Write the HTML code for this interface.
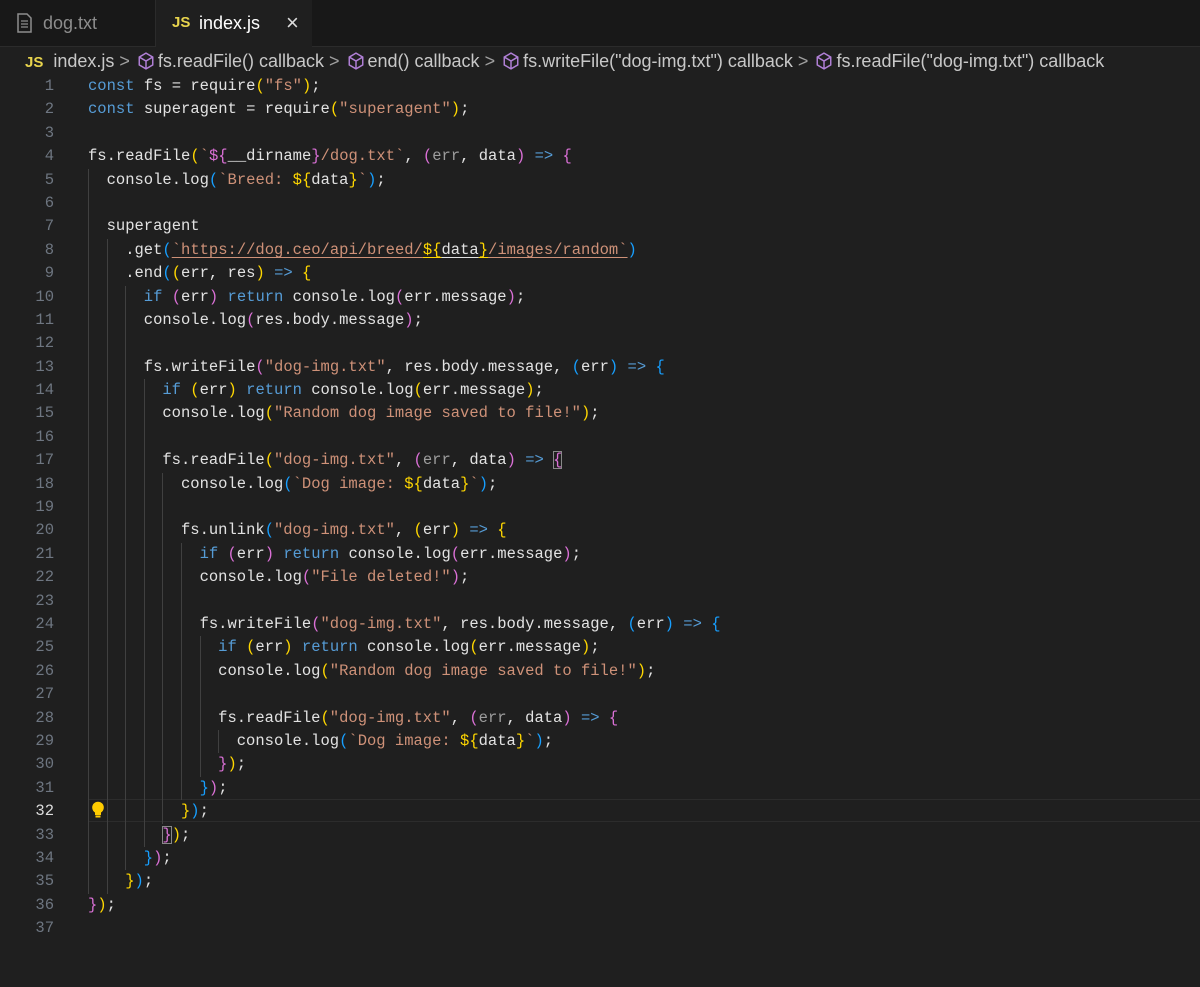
<!DOCTYPE html>
<html><head><meta charset="utf-8"><style>
body{margin:0;width:1200px;height:987px;background:#1f1f1f;overflow:hidden;font-family:"Liberation Sans",sans-serif;position:relative}
.tabs{position:absolute;left:0;top:0;width:1200px;height:46px;background:#181818;border-bottom:1px solid #2b2b2b}
.tab{position:absolute;top:0;height:46px;line-height:46px;font-size:18px}
.t1{left:0;width:155px;color:#8d8d8d;border-right:1px solid #2b2b2b}
.t2{left:156px;width:156px;background:#1f1f1f;color:#fff;height:47px}
.js{color:#e8d44d;font-weight:bold;font-size:15px}
.bc{position:absolute;left:25px;top:49px;height:24px;line-height:24px;font-size:18px;color:#c8c8c8;white-space:nowrap}
.bc svg{vertical-align:-3px;margin:0 3px 0 2px}
.sep{color:#a0a0a0;margin:0 5px}
.code{position:absolute;left:0;top:75px;font-family:"Liberation Mono",monospace;font-size:15.5px;line-height:23.4px;color:#e2e2e2}
.ln{display:inline-block;width:54px;text-align:right;color:#6e7681;margin-right:34px}
.l{height:23.4px;white-space:pre;overflow:hidden}
.i{display:inline-block;width:2ch;box-shadow:inset 1px 0 0 #404040;height:23.4px;vertical-align:top}
.k{color:#569cd6}.s{color:#ce9178}.g{color:#ffd700}.o{color:#da70d6}.b{color:#179fff}.d{color:#9d9d9d}.u{text-decoration:underline;text-underline-offset:3px}
.cur{position:absolute;left:88px;top:799px;width:1112px;height:21px;border-top:1px solid #2c2c2c;border-bottom:1px solid #2c2c2c}
</style></head><body>
<div class="tabs">
<div class="tab t1"><svg style="position:absolute;left:16px;top:13px" width="17" height="20" viewBox="0 0 17 20"><path d="M2 1h9l4 4v14H2z" fill="none" stroke="#8d8d8d" stroke-width="1.5"/><path d="M5 8h7M5 11h7M5 14h7" stroke="#8d8d8d" stroke-width="1.3"/></svg><span style="position:absolute;left:43px">dog.txt</span></div>
<div class="tab t2"><span class="js" style="position:absolute;left:16px">JS</span><span style="position:absolute;left:43px">index.js</span><span style="position:absolute;left:130px;font-size:22px;color:#ddd">×</span></div>
</div>
<div class="bc"><span class="js">JS</span>&nbsp; index.js<span class="sep">&gt;</span><svg width="18" height="18" viewBox="0 0 16 16"><path d="M8 1l6 3.5v7L8 15l-6-3.5v-7z M2 4.5L8 8l6-3.5M8 8v7" fill="none" stroke="#b180d7" stroke-width="1.3"/></svg>fs.readFile() callback<span class="sep">&gt;</span><svg width="18" height="18" viewBox="0 0 16 16"><path d="M8 1l6 3.5v7L8 15l-6-3.5v-7z M2 4.5L8 8l6-3.5M8 8v7" fill="none" stroke="#b180d7" stroke-width="1.3"/></svg>end() callback<span class="sep">&gt;</span><svg width="18" height="18" viewBox="0 0 16 16"><path d="M8 1l6 3.5v7L8 15l-6-3.5v-7z M2 4.5L8 8l6-3.5M8 8v7" fill="none" stroke="#b180d7" stroke-width="1.3"/></svg>fs.writeFile("dog-img.txt") callback<span class="sep">&gt;</span><svg width="18" height="18" viewBox="0 0 16 16"><path d="M8 1l6 3.5v7L8 15l-6-3.5v-7z M2 4.5L8 8l6-3.5M8 8v7" fill="none" stroke="#b180d7" stroke-width="1.3"/></svg>fs.readFile("dog-img.txt") callback</div>
<div class="cur"></div>
<svg style="position:absolute;left:91px;top:801px" width="14" height="18" viewBox="0 0 14 18"><circle cx="7" cy="6.5" r="5.8" fill="#ffcc00"/><rect x="4" y="10" width="6" height="4" fill="#ffcc00"/><rect x="4.5" y="14.5" width="5" height="2" fill="#ffcc00"/></svg>
<div class="code">
<div class="l"><span class="ln">1</span><span class="k">const</span> fs = require<span class="g">(</span><span class="s">"fs"</span><span class="g">)</span>;</div>
<div class="l"><span class="ln">2</span><span class="k">const</span> superagent = require<span class="g">(</span><span class="s">"superagent"</span><span class="g">)</span>;</div>
<div class="l"><span class="ln">3</span></div>
<div class="l"><span class="ln">4</span>fs.readFile<span class="g">(</span><span class="s">`</span><span class="o">${</span>__dirname<span class="o">}</span><span class="s">/dog.txt`</span>, <span class="o">(</span><span class="d">err</span>, data<span class="o">)</span> <span class="k">=&gt;</span> <span class="o">{</span></div>
<div class="l"><span class="ln">5</span><span class="i"></span>console.log<span class="b">(</span><span class="s">`Breed: </span><span class="g">${</span>data<span class="g">}</span><span class="s">`</span><span class="b">)</span>;</div>
<div class="l"><span class="ln">6</span><span class="i"></span></div>
<div class="l"><span class="ln">7</span><span class="i"></span>superagent</div>
<div class="l"><span class="ln">8</span><span class="i"></span><span class="i"></span>.get<span class="b">(</span><span class="s u">`https://dog.ceo/api/breed/</span><span class="g u">${</span><span class="u">data</span><span class="g u">}</span><span class="s u">/images/random`</span><span class="b">)</span></div>
<div class="l"><span class="ln">9</span><span class="i"></span><span class="i"></span>.end<span class="b">(</span><span class="g">(</span>err, res<span class="g">)</span> <span class="k">=&gt;</span> <span class="g">{</span></div>
<div class="l"><span class="ln">10</span><span class="i"></span><span class="i"></span><span class="i"></span><span class="k">if</span> <span class="o">(</span>err<span class="o">)</span> <span class="k">return</span> console.log<span class="o">(</span>err.message<span class="o">)</span>;</div>
<div class="l"><span class="ln">11</span><span class="i"></span><span class="i"></span><span class="i"></span>console.log<span class="o">(</span>res.body.message<span class="o">)</span>;</div>
<div class="l"><span class="ln">12</span><span class="i"></span><span class="i"></span><span class="i"></span></div>
<div class="l"><span class="ln">13</span><span class="i"></span><span class="i"></span><span class="i"></span>fs.writeFile<span class="o">(</span><span class="s">"dog-img.txt"</span>, res.body.message, <span class="b">(</span>err<span class="b">)</span> <span class="k">=&gt;</span> <span class="b">{</span></div>
<div class="l"><span class="ln">14</span><span class="i"></span><span class="i"></span><span class="i"></span><span class="i"></span><span class="k">if</span> <span class="g">(</span>err<span class="g">)</span> <span class="k">return</span> console.log<span class="g">(</span>err.message<span class="g">)</span>;</div>
<div class="l"><span class="ln">15</span><span class="i"></span><span class="i"></span><span class="i"></span><span class="i"></span>console.log<span class="g">(</span><span class="s">"Random dog image saved to file!"</span><span class="g">)</span>;</div>
<div class="l"><span class="ln">16</span><span class="i"></span><span class="i"></span><span class="i"></span><span class="i"></span></div>
<div class="l"><span class="ln">17</span><span class="i"></span><span class="i"></span><span class="i"></span><span class="i"></span>fs.readFile<span class="g">(</span><span class="s">"dog-img.txt"</span>, <span class="o">(</span><span class="d">err</span>, data<span class="o">)</span> <span class="k">=&gt;</span> <span class="o" style="outline:1px solid #888;outline-offset:-1px">{</span></div>
<div class="l"><span class="ln">18</span><span class="i"></span><span class="i"></span><span class="i"></span><span class="i"></span><span class="i"></span>console.log<span class="b">(</span><span class="s">`Dog image: </span><span class="g">${</span>data<span class="g">}</span><span class="s">`</span><span class="b">)</span>;</div>
<div class="l"><span class="ln">19</span><span class="i"></span><span class="i"></span><span class="i"></span><span class="i"></span><span class="i"></span></div>
<div class="l"><span class="ln">20</span><span class="i"></span><span class="i"></span><span class="i"></span><span class="i"></span><span class="i"></span>fs.unlink<span class="b">(</span><span class="s">"dog-img.txt"</span>, <span class="g">(</span>err<span class="g">)</span> <span class="k">=&gt;</span> <span class="g">{</span></div>
<div class="l"><span class="ln">21</span><span class="i"></span><span class="i"></span><span class="i"></span><span class="i"></span><span class="i"></span><span class="i"></span><span class="k">if</span> <span class="o">(</span>err<span class="o">)</span> <span class="k">return</span> console.log<span class="o">(</span>err.message<span class="o">)</span>;</div>
<div class="l"><span class="ln">22</span><span class="i"></span><span class="i"></span><span class="i"></span><span class="i"></span><span class="i"></span><span class="i"></span>console.log<span class="o">(</span><span class="s">"File deleted!"</span><span class="o">)</span>;</div>
<div class="l"><span class="ln">23</span><span class="i"></span><span class="i"></span><span class="i"></span><span class="i"></span><span class="i"></span><span class="i"></span></div>
<div class="l"><span class="ln">24</span><span class="i"></span><span class="i"></span><span class="i"></span><span class="i"></span><span class="i"></span><span class="i"></span>fs.writeFile<span class="o">(</span><span class="s">"dog-img.txt"</span>, res.body.message, <span class="b">(</span>err<span class="b">)</span> <span class="k">=&gt;</span> <span class="b">{</span></div>
<div class="l"><span class="ln">25</span><span class="i"></span><span class="i"></span><span class="i"></span><span class="i"></span><span class="i"></span><span class="i"></span><span class="i"></span><span class="k">if</span> <span class="g">(</span>err<span class="g">)</span> <span class="k">return</span> console.log<span class="g">(</span>err.message<span class="g">)</span>;</div>
<div class="l"><span class="ln">26</span><span class="i"></span><span class="i"></span><span class="i"></span><span class="i"></span><span class="i"></span><span class="i"></span><span class="i"></span>console.log<span class="g">(</span><span class="s">"Random dog image saved to file!"</span><span class="g">)</span>;</div>
<div class="l"><span class="ln">27</span><span class="i"></span><span class="i"></span><span class="i"></span><span class="i"></span><span class="i"></span><span class="i"></span><span class="i"></span></div>
<div class="l"><span class="ln">28</span><span class="i"></span><span class="i"></span><span class="i"></span><span class="i"></span><span class="i"></span><span class="i"></span><span class="i"></span>fs.readFile<span class="g">(</span><span class="s">"dog-img.txt"</span>, <span class="o">(</span><span class="d">err</span>, data<span class="o">)</span> <span class="k">=&gt;</span> <span class="o">{</span></div>
<div class="l"><span class="ln">29</span><span class="i"></span><span class="i"></span><span class="i"></span><span class="i"></span><span class="i"></span><span class="i"></span><span class="i"></span><span class="i"></span>console.log<span class="b">(</span><span class="s">`Dog image: </span><span class="g">${</span>data<span class="g">}</span><span class="s">`</span><span class="b">)</span>;</div>
<div class="l"><span class="ln">30</span><span class="i"></span><span class="i"></span><span class="i"></span><span class="i"></span><span class="i"></span><span class="i"></span><span class="i"></span><span class="o">}</span><span class="g">)</span>;</div>
<div class="l"><span class="ln">31</span><span class="i"></span><span class="i"></span><span class="i"></span><span class="i"></span><span class="i"></span><span class="i"></span><span class="b">}</span><span class="o">)</span>;</div>
<div class="l"><span class="ln" style="color:#ddd">32</span><span class="i"></span><span class="i"></span><span class="i"></span><span class="i"></span><span class="i"></span><span class="g">}</span><span class="b">)</span>;</div>
<div class="l"><span class="ln">33</span><span class="i"></span><span class="i"></span><span class="i"></span><span class="i"></span><span class="o" style="outline:1px solid #888;outline-offset:-1px">}</span><span class="g">)</span>;</div>
<div class="l"><span class="ln">34</span><span class="i"></span><span class="i"></span><span class="i"></span><span class="b">}</span><span class="o">)</span>;</div>
<div class="l"><span class="ln">35</span><span class="i"></span><span class="i"></span><span class="g">}</span><span class="b">)</span>;</div>
<div class="l"><span class="ln">36</span><span class="o">}</span><span class="g">)</span>;</div>
<div class="l"><span class="ln">37</span></div>
</div>
</body></html>
